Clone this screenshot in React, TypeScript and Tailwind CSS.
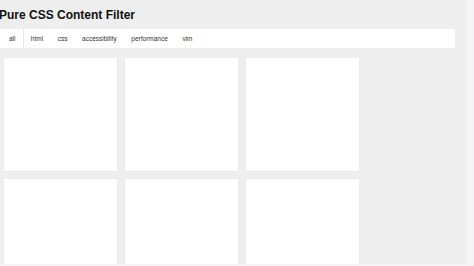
const tags = ['all', 'html', 'css', 'accessibility', 'performance', 'vim'];

const App = () => {
  return (
    <div className="min-h-screen bg-[#f5f5f5]" style={{ fontFamily: '"Liberation Sans", Arial, sans-serif' }}>
      <div className="w-[466px] h-[264px] bg-[#eeeeee] overflow-hidden">
        <h1 className="pt-[9px] text-[12px] leading-[12px] font-bold text-[#111] -ml-[1px]">
          Pure CSS Content Filter
        </h1>

        <nav className="mt-[8px] w-[455px] h-[19px] bg-white flex items-stretch pl-[2px] text-[6.5px] text-[#333]">
          {tags.map((tag, i) => (
            <span
              key={tag}
              className={
                i === 0
                  ? 'flex items-center px-[7px] border-r border-[#e6e6e6]'
                  : 'flex items-center px-[7.3px]'
              }
            >
              {tag}
            </span>
          ))}
        </nav>

        <div className="mt-[10px] pl-[4px] grid grid-cols-[repeat(3,113px)] gap-[8px]">
          {Array.from({ length: 6 }).map((_, i) => (
            <div key={i} className="h-[113px] bg-white shadow-[0_0_1px_rgba(0,0,0,0.08)]" />
          ))}
        </div>
      </div>
    </div>
  );
};

export default App;
